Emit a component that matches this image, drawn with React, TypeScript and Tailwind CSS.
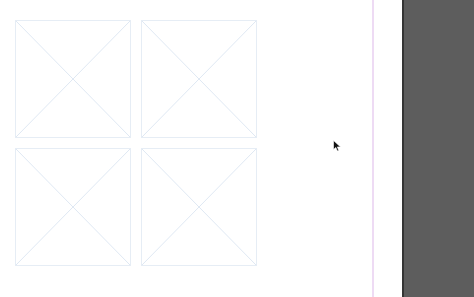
import React from 'react';

// Empty image placeholder frame: outline with crossed diagonals
const Placeholder = () => (
    <div className="relative w-[116px] h-[118px] border border-[#e6edf5]">
        <svg className="absolute inset-0 w-full h-full" viewBox="0 0 114 116" preserveAspectRatio="none">
            <line x1="0" y1="0" x2="114" y2="116" stroke="#dfe8f3" strokeWidth="1" />
            <line x1="114" y1="0" x2="0" y2="116" stroke="#dfe8f3" strokeWidth="1" />
        </svg>
    </div>
);

export default function App() {
    return (
        <div className="relative flex h-[297px] w-[474px] overflow-hidden bg-white font-['Liberation_Sans',sans-serif]">
            <div className="w-[372px] shrink-0 pl-[15px] pt-[20px]">
                <div className="grid grid-cols-[116px_116px] gap-[10px]">
                    <Placeholder />
                    <Placeholder />
                    <Placeholder />
                    <Placeholder />
                </div>
            </div>
            <div className="w-[2px] shrink-0 bg-[#eedbf4]" />
            <div className="w-[28px] shrink-0 bg-white" />
            <div className="w-[2px] shrink-0 bg-[#353535]" />
            <div className="flex-1 bg-[#5d5d5d]" />

            {/* mouse pointer */}
            <svg className="absolute left-[333px] top-[140px]" width="9" height="12" viewBox="0 0 9 12">
                <path d="M0.5 0.5 L0.5 9.5 L2.8 7.4 L4.4 11 L5.8 10.4 L4.3 6.9 L7.5 6.9 Z" fill="#111" stroke="#fff" strokeWidth="0.6" />
            </svg>
        </div>
    );
}
